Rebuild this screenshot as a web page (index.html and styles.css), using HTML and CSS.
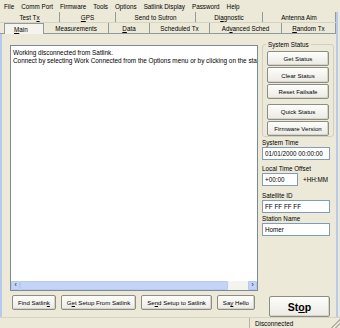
FILE: index.html
```html
<!DOCTYPE html>
<html lang="en">
<head>
    <meta charset="UTF-8">
    <title>Satlink Comm</title>
    <link rel="stylesheet" href="styles.css">
</head>
<body>
    <div class="window">
        <div class="menubar">
            <span>File</span>
            <span>Comm Port</span>
            <span>Firmware</span>
            <span>Tools</span>
            <span>Options</span>
            <span>Satlink Display</span>
            <span>Password</span>
            <span>Help</span>
        </div>

        <div class="main">
            <div class="tabrow back">
                <div class="tab w60">Test T<u>x</u></div>
                <div class="tab w56"><u>G</u>PS</div>
                <div class="tab w80">Send to Sutron</div>
                <div class="tab w67">Di<u>a</u>gnostic</div>
                <div class="tab w73">Antenna Aim</div>
            </div>
            <div class="tabrow front">
                <div class="tab selected"><u>M</u>ain</div>
                <div class="tab w65">Measurements</div>
                <div class="tab w41"><u>D</u>ata</div>
                <div class="tab w60">Scheduled Tx</div>
                <div class="tab w72">Ad<u>v</u>anced Sched</div>
                <div class="tab w54"><u>R</u>andom Tx</div>
            </div>

            <div class="page">
                <div class="left">
                    <div class="log">
                        <div class="log-text">
                            <div>Working disconnected from Satlink.</div>
                            <div>Connect by selecting Work Connected from the Options menu or by clicking on the status bar.</div>
                        </div>
                        <div class="hscroll">
                            <div class="arrow">&#8249;</div>
                            <div class="track"><div class="thumb"></div></div>
                            <div class="arrow">&#8250;</div>
                        </div>
                    </div>
                    <div class="actions">
                        <button class="btn">Find Satlin<u>k</u></button>
                        <button class="btn">G<u>e</u>t Setup From Satlink</button>
                        <button class="btn">Se<u>n</u>d Setup to Satlink</button>
                        <button class="btn">Sa<u>y</u> Hello</button>
                    </div>
                </div>

                <div class="right">
                    <div class="group">
                        <span class="group-label">System Status</span>
                        <button class="btn side">Get Status</button>
                        <button class="btn side">Clear Status</button>
                        <button class="btn side">Reset Failsafe</button>
                        <button class="btn side gap">Quick Status</button>
                        <button class="btn side">Firmware Version</button>
                    </div>

                    <div class="field">
                        <label>System Time</label>
                        <div class="input">01/01/2000 00:00:00</div>
                    </div>
                    <div class="field f-offset">
                        <label>Local Time Offset</label>
                        <div class="inline">
                            <div class="input short">+00:00</div>
                            <span>+HH:MM</span>
                        </div>
                    </div>
                    <div class="field f-sat">
                        <label>Satellite ID</label>
                        <div class="input">FF FF FF FF</div>
                    </div>
                    <div class="field f-station">
                        <label>Station Name</label>
                        <div class="input">Homer</div>
                    </div>

                    <button class="btn stop">St<u>o</u>p</button>
                </div>
            </div>
        </div>

        <div class="statusbar">
            <div class="status-main"></div>
            <div class="status-conn">Disconnected</div>
            <div class="grip"></div>
        </div>
    </div>
</body>
</html>
```

FILE: styles.css
```css
:root {
    --face: #ece9d8;
    --frame: #b6c9ee;
    --edge: #919b9c;
    --input-border: #7f9db9;
}

* {
    box-sizing: border-box;
}

body {
    margin: 0;
    background: var(--face);
    font-family: 'Liberation Sans', Arial, sans-serif;
    font-size: 6px;
    color: #000;
}

.window {
    width: 340px;
    height: 328px;
    display: flex;
    flex-direction: column;
    overflow: hidden;
}

.menubar {
    height: 12px;
    display: flex;
    align-items: center;
    gap: 7px;
    padding-left: 4px;
    font-size: 6.3px;
}

.main {
    flex: 1;
    display: flex;
    flex-direction: column;
    border-right: 2px solid var(--frame);
    margin-right: 2px;
}

.tabrow {
    height: 11px;
    display: flex;
    align-items: stretch;
}

.tab {
    display: flex;
    align-items: center;
    justify-content: center;
    border-right: 1px solid var(--edge);
    font-size: 6.3px;
}

.tabrow.back {
    border-bottom: 1px solid #d8d4c4;
}

.tabrow.front {
    padding-left: 4px;
    border-bottom: 1px solid var(--edge);
}

.tab.selected {
    width: 40px;
    background: #f4f3ee;
    border: 1px solid var(--edge);
    border-bottom: none;
    margin-bottom: -1px;
    justify-content: flex-start;
    padding-left: 9px;
}

.w41 { width: 41px; }
.w54 { width: 54px; }
.w56 { width: 56px; }
.w60 { width: 60px; }
.w65 { width: 65px; }
.w67 { width: 67px; }
.w72 { width: 72px; }
.w73 { width: 73px; }
.w80 { width: 80px; }

.page {
    flex: 1;
    display: flex;
    gap: 4px;
    padding: 11px 2px 0 8px;
    border-left: 2px solid var(--frame);
}

.left {
    width: 248px;
    display: flex;
    flex-direction: column;
}

.log {
    height: 246px;
    background: #fff;
    border: 1px solid #7a8a99;
    display: flex;
    flex-direction: column;
}

.log-text {
    flex: 1;
    padding: 3px 2px;
    white-space: nowrap;
    overflow: hidden;
    line-height: 8px;
    font-size: 6.4px;
}

.hscroll {
    height: 9px;
    display: flex;
    background: #f4f3ee;
}

.arrow {
    width: 9px;
    background: #c4d4f7;
    border: 1px solid #b6c7ec;
    border-radius: 1px;
    color: #4d6185;
    font-size: 8px;
    font-weight: bold;
    line-height: 6px;
    text-align: center;
}

.track {
    flex: 1;
    display: flex;
}

.thumb {
    width: 208px;
    background: #c4d4f7;
    border: 1px solid #b8c9f0;
    border-radius: 1px;
}

.actions {
    display: flex;
    gap: 5px;
    margin-top: 4px;
    padding-left: 2px;
}

.btn {
    font-family: inherit;
    font-size: 6.1px;
    color: #000;
    height: 15px;
    padding: 0 5px;
    background: linear-gradient(#fdfdfb, #ebeae4);
    border: 1px solid #8d8d86;
    border-radius: 2px;
    box-shadow: inset -1px -1px 0 #d6d3c8;
}

.right {
    width: 72px;
    display: flex;
    flex-direction: column;
}

.group {
    position: relative;
    margin-top: -1px;
    height: 93px;
    border: 1px solid #d0d0bf;
    border-radius: 3px;
    padding: 6px 4px 0 4px;
    display: flex;
    flex-direction: column;
    gap: 1px;
}

.group-label {
    position: absolute;
    top: -4px;
    left: 3px;
    padding: 0 2px;
    background: var(--face);
    font-size: 6.3px;
}

.btn.side {
    width: 62px;
    height: 16px;
    padding: 0;
}

.btn.side.gap {
    margin-top: 4px;
}

.field {
    display: flex;
    flex-direction: column;
    margin-top: 1px;
}

.field.f-offset {
    margin-top: 4px;
}

.field.f-sat {
    margin-top: 5px;
}

.field.f-station {
    margin-top: 1px;
}

.field label {
    font-size: 6.3px;
    height: 9px;
    display: flex;
    align-items: center;
}

.input {
    height: 13px;
    width: 68px;
    background: #fff;
    border: 1px solid var(--input-border);
    padding-left: 2px;
    display: flex;
    align-items: center;
    font-size: 6.3px;
}

.inline {
    display: flex;
    align-items: center;
    gap: 5px;
    font-size: 6.3px;
}

.input.short {
    width: 36px;
}

.btn.stop {
    margin-top: auto;
    margin-bottom: 0;
    margin-left: 7px;
    width: 61px;
    height: 21px;
    font-size: 10.5px;
    font-weight: bold;
}

.statusbar {
    height: 11px;
    display: flex;
    border-top: 1px solid #d8d4c4;
    font-size: 6.3px;
}

.status-main {
    width: 250px;
    border-right: 1px solid #b5b2a5;
}

.status-conn {
    flex: 1;
    padding-left: 5px;
    display: flex;
    align-items: center;
}

.grip {
    width: 10px;
    background: linear-gradient(135deg, transparent 55%, #b5b2a5 55%, #b5b2a5 62%, transparent 62%, transparent 75%, #b5b2a5 75%, #b5b2a5 82%, transparent 82%);
}
```
